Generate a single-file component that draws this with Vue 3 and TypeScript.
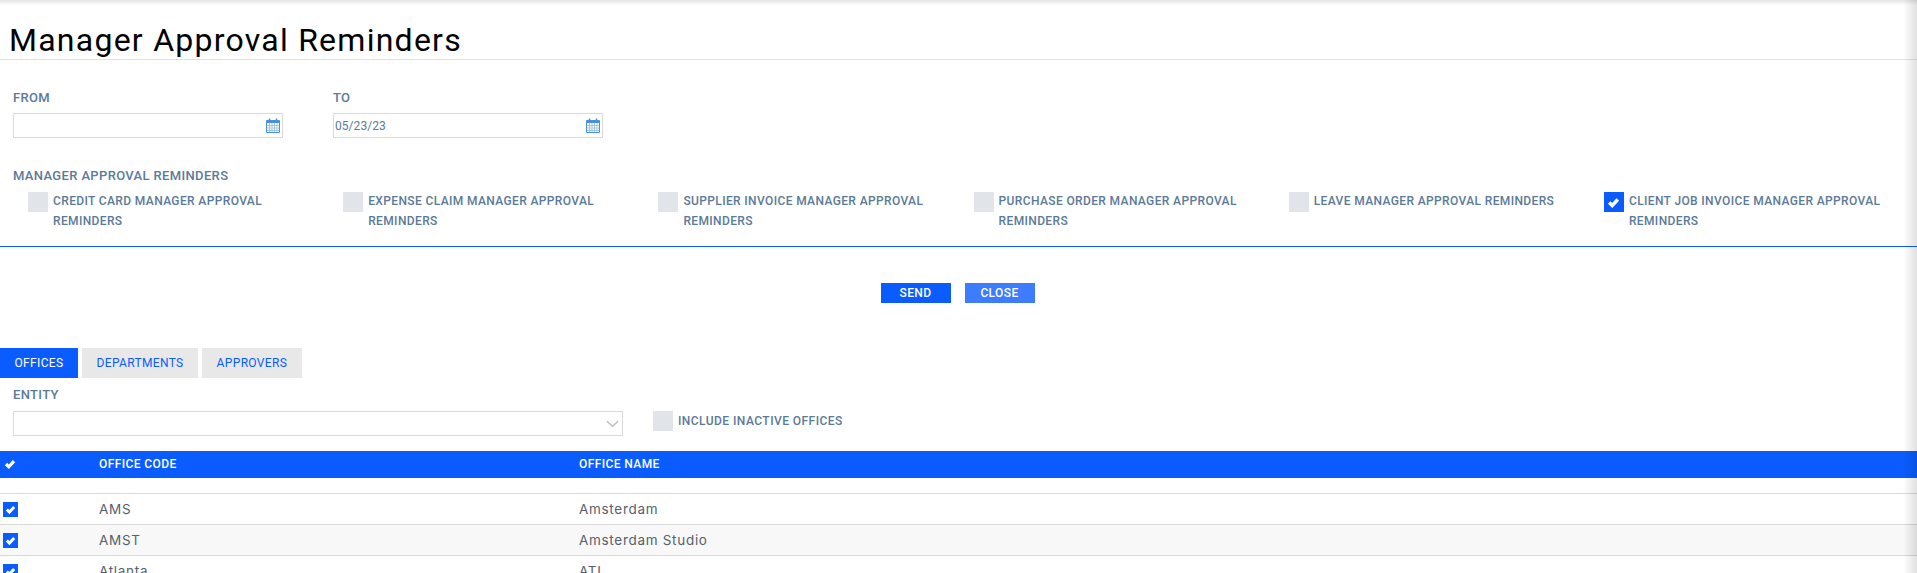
<script setup lang="ts">
import { ref } from "vue";

const reminders = ref([
  { label: "CREDIT CARD MANAGER APPROVAL REMINDERS", checked: false },
  { label: "EXPENSE CLAIM MANAGER APPROVAL REMINDERS", checked: false },
  { label: "SUPPLIER INVOICE MANAGER APPROVAL REMINDERS", checked: false },
  { label: "PURCHASE ORDER MANAGER APPROVAL REMINDERS", checked: false },
  { label: "LEAVE MANAGER APPROVAL REMINDERS", checked: false },
  { label: "CLIENT JOB INVOICE MANAGER APPROVAL REMINDERS", checked: true },
]);

const dates = [
  { label: "FROM", value: "" },
  { label: "TO", value: "05/23/23" },
];

const tabs = ["OFFICES", "DEPARTMENTS", "APPROVERS"];
const activeTab = ref("OFFICES");

const offices = [
  { code: "AMS", name: "Amsterdam" },
  { code: "AMST", name: "Amsterdam Studio" },
  { code: "Atlanta", name: "ATL" },
];

const checkPath = "M2.5 7.5 L6 11 L12.5 4";
</script>

<template>
  <div class="page">
    <h1 class="title">Manager Approval Reminders</h1>

    <div class="dates">
      <div v-for="field in dates" :key="field.label" class="date-field">
        <label class="label">{{ field.label }}</label>
        <div class="input">
          <span class="input-value">{{ field.value }}</span>
          <svg class="calendar" viewBox="0 0 14 15" width="14" height="15">
            <path d="M3.5 .5v3M10.5 .5v3" stroke="#4a90d9" stroke-width="1.6" fill="none" />
            <path d="M.5 2.5h13v12H.5z" fill="#fff" stroke="#4a90d9" />
            <path d="M1 3h12v2H1z" fill="#4a90d9" />
            <path d="M1 7.5h12M1 10h12M1 12.5h12M3.5 5v9M6 5v9M8.5 5v9M11 5v9" stroke="#8dbbe8" stroke-width=".8" fill="none" />
          </svg>
        </div>
      </div>
    </div>

    <div class="label group-label">MANAGER APPROVAL REMINDERS</div>
    <div class="reminders">
      <div v-for="item in reminders" :key="item.label" class="reminder">
        <span class="box" :class="{ checked: item.checked }">
          <svg v-if="item.checked" viewBox="0 0 15 15" width="13" height="13">
            <path :d="checkPath" fill="none" stroke="#fff" stroke-width="4" />
          </svg>
        </span>
        <span class="label reminder-text">{{ item.label }}</span>
      </div>
    </div>

    <div class="actions">
      <button class="btn send">SEND</button>
      <button class="btn close">CLOSE</button>
    </div>

    <div class="tabs">
      <div v-for="tab in tabs" :key="tab" class="tab" :class="{ active: tab === activeTab }">{{ tab }}</div>
    </div>

    <div class="label entity-label">ENTITY</div>
    <div class="entity-row">
      <div class="select">
        <svg viewBox="0 0 14 8" width="13" height="8">
          <path d="M1 1 L7 6.5 L13 1" fill="none" stroke="#bdbdbd" stroke-width="1.6" />
        </svg>
      </div>
      <div class="include">
        <span class="box"></span>
        <span class="label include-text">INCLUDE INACTIVE OFFICES</span>
      </div>
    </div>

    <div class="table">
      <div class="row head">
        <div class="cell-check">
          <svg viewBox="0 0 15 15" width="12" height="12">
            <path :d="checkPath" fill="none" stroke="#fff" stroke-width="4" />
          </svg>
        </div>
        <div class="cell-code">OFFICE CODE</div>
        <div>OFFICE NAME</div>
      </div>
      <div class="filter-row"></div>
      <div v-for="office in offices" :key="office.code" class="row body">
        <div class="cell-check">
          <span class="mini-box">
            <svg viewBox="0 0 15 15" width="11" height="11">
              <path :d="checkPath" fill="none" stroke="#fff" stroke-width="4" />
            </svg>
          </span>
        </div>
        <div class="cell-code">{{ office.code }}</div>
        <div>{{ office.name }}</div>
      </div>
    </div>
    <div class="edge"></div>
  </div>
</template>

<style>
html,
body {
  margin: 0;
  background: #fff;
  overflow: hidden;
}
</style>

<style scoped>
.page {
  position: relative;
  width: 1917px;
  height: 573px;
  overflow: hidden;
  background: linear-gradient(#e4e4e4, #fff 5px);
  font-family: Roboto, "Liberation Sans", sans-serif;
}

.title {
  margin: 0;
  height: 60px;
  padding: 21px 0 0 9px;
  box-sizing: border-box;
  border-bottom: 1px solid #e2e2e2;
  font-size: 32px;
  line-height: 38px;
  font-weight: 400;
  letter-spacing: 1.25px;
  color: #000;
}

.label {
  font-size: 13px;
  line-height: 20px;
  font-weight: 500;
  letter-spacing: 0.35px;
  color: #5b7a99;
}

.dates {
  display: flex;
  gap: 50px;
  padding: 28px 0 0 13px;
}

.date-field {
  width: 270px;
}

.date-field .label {
  display: block;
  margin-bottom: 5px;
}

.input {
  display: flex;
  align-items: center;
  justify-content: space-between;
  height: 25px;
  box-sizing: border-box;
  border: 1px solid #d9d9d9;
  padding: 0 2px 0 1px;
}

.input-value {
  font-size: 12px;
  color: #5b7a99;
  letter-spacing: 0.05px;
}

.group-label {
  margin: 28px 0 0 13px;
}

.reminders {
  display: grid;
  grid-template-columns: repeat(6, 315.2px);
  height: 54px;
  padding: 6px 0 0 28px;
  border-bottom: 1px solid #0a5cff;
}

.reminder {
  display: flex;
  gap: 5px;
  padding-right: 28px;
}

.box {
  flex: none;
  display: flex;
  align-items: center;
  justify-content: center;
  width: 20px;
  height: 20px;
  background: #e1e4e9;
}

.box.checked {
  background: #0a5cff;
}

.reminder-text {
  margin-top: -1px;
  font-size: 12px;
  font-weight: 500;
  letter-spacing: 0.37px;
}

.actions {
  display: flex;
  justify-content: center;
  gap: 14px;
  padding: 36px 2px 0 0;
}

.btn {
  width: 70px;
  height: 20px;
  padding: 0;
  border: 0;
  font-family: inherit;
  font-size: 12px;
  font-weight: 500;
  letter-spacing: 0.4px;
  color: #fff;
}

.send {
  background: #0a5cff;
}

.close {
  background: #3d7bff;
}

.tabs {
  display: flex;
  gap: 4px;
  margin-top: 45px;
}

.tab {
  height: 30px;
  padding: 0 14.5px;
  line-height: 30px;
  font-size: 12px;
  font-weight: 400;
  letter-spacing: 0.35px;
  background: #e8e8e8;
  color: #0a5cff;
}

.tab.active {
  background: #0a5cff;
  color: #fff;
}

.entity-label {
  margin: 7px 0 0 13px;
}

.entity-row {
  display: flex;
  align-items: flex-start;
  gap: 30px;
  padding: 6px 0 0 13px;
}

.select {
  display: flex;
  align-items: center;
  justify-content: flex-end;
  width: 610px;
  height: 25px;
  box-sizing: border-box;
  border: 1px solid #d9d9d9;
  padding-right: 3px;
}

.include {
  display: flex;
  gap: 5px;
}

.include-text {
  font-size: 12px;
  font-weight: 500;
  letter-spacing: 0.45px;
}

.table {
  margin-top: 15px;
  font-size: 13px;
}

.row {
  display: grid;
  grid-template-columns: 99px 480px 1fr;
  align-items: center;
}

.head {
  height: 27px;
  padding-bottom: 1px;
  box-sizing: border-box;
  background: #0a5cff;
  color: #fff;
  font-size: 12px;
  font-weight: 500;
  letter-spacing: 0.4px;
}

.filter-row {
  height: 15px;
}

.body {
  height: 31px;
  box-sizing: border-box;
  border-top: 1px solid #d9d9d9;
  font-family: Inter, sans-serif;
  font-size: 13.5px;
  color: #57606e;
  letter-spacing: 0.7px;
}

.body:nth-of-type(even) {
  background: #f8f8f8;
}

.cell-check {
  display: flex;
  padding-left: 4px;
}

.mini-box {
  display: flex;
  align-items: center;
  justify-content: center;
  width: 15px;
  height: 15px;
  margin-left: -1px;
  background: #0a5cff;
}

.edge {
  position: absolute;
  top: 0;
  right: 0;
  bottom: 0;
  width: 14px;
  pointer-events: none;
  background: linear-gradient(90deg, rgba(0, 0, 0, 0), rgba(0, 0, 0, 0.12));
}
</style>
